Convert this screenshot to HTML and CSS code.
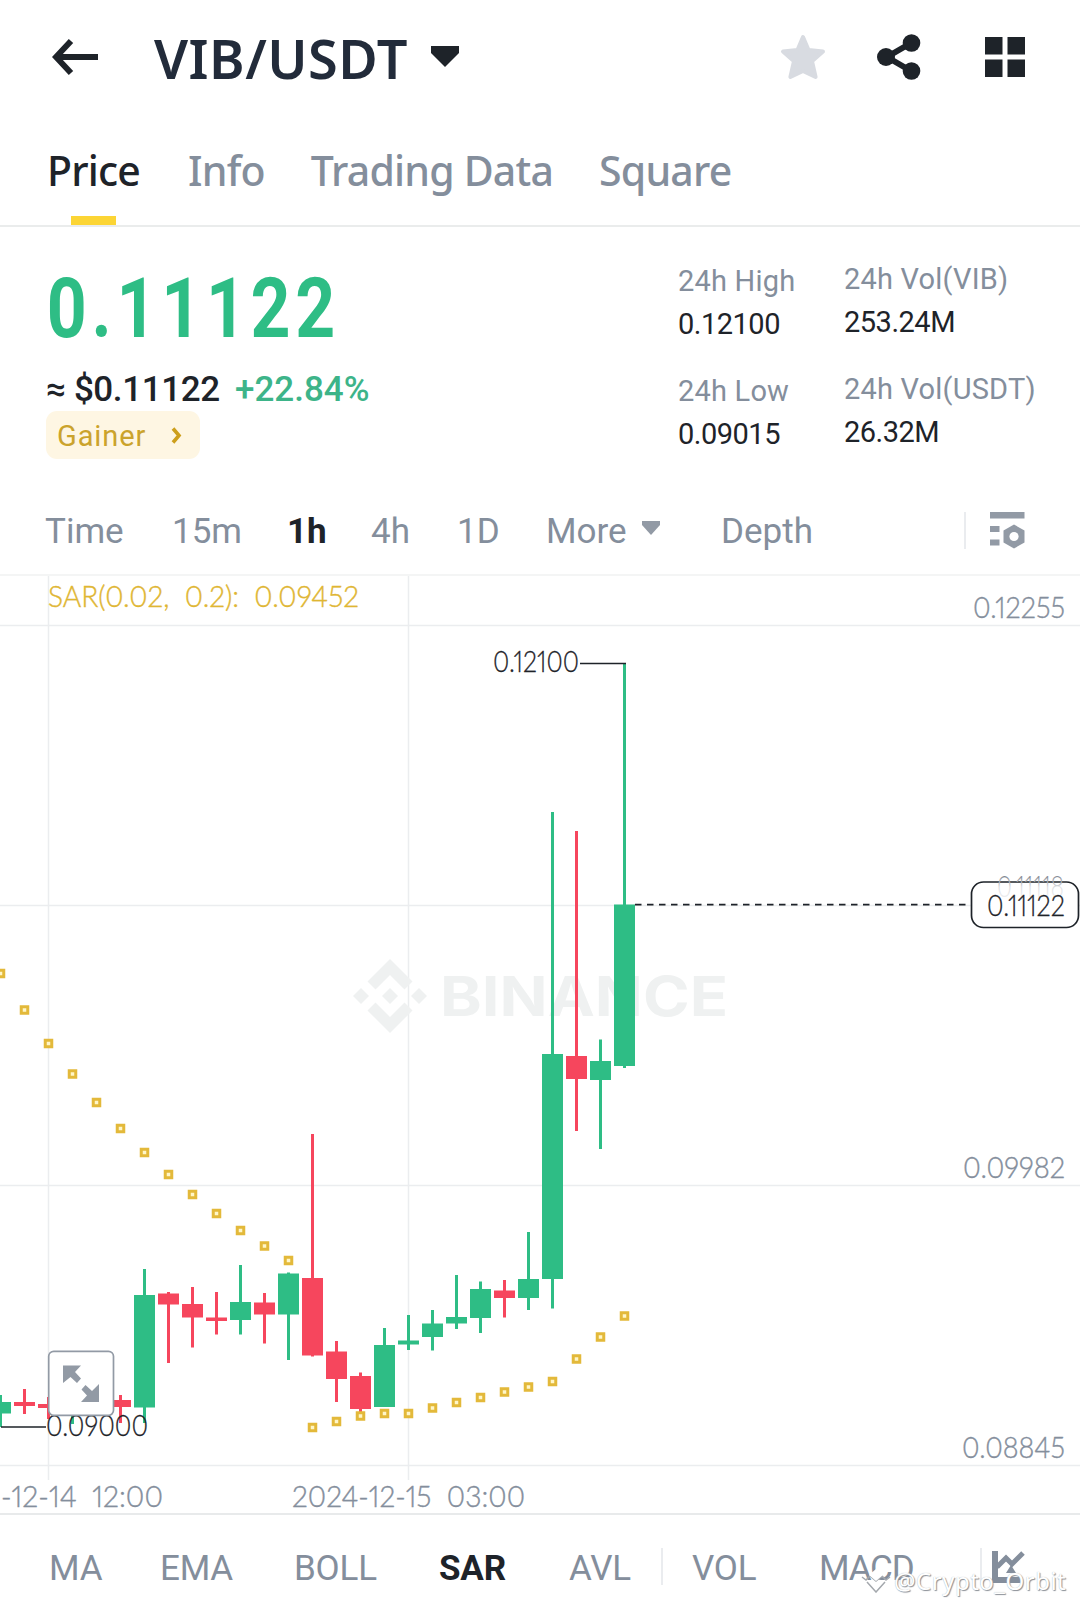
FILE: index.html
```html
<!DOCTYPE html>
<html lang="en">
<head>
    <meta charset="UTF-8">
    <meta name="viewport" content="width=device-width, initial-scale=1.0">
    <title>VIB/USDT</title>
    <link rel="stylesheet" href="styles.css">
</head>
<body>
    <div class="header">
        <svg class="back" width="46" height="38" viewBox="0 0 46 38">
            <path d="M46 19H6M19 3L4 19l15 16" fill="none" stroke="#1e2329" stroke-width="6"/>
        </svg>
        <h1>VIB/USDT</h1>
        <svg class="caret" width="28" height="22" viewBox="0 0 28 22"><path d="M0 0h28v7L14 21 0 7z" fill="#1e2329"/></svg>
        <svg class="star" width="46" height="46" viewBox="0 0 46 46">
            <path d="M23 3l5.500 13 14.500 1.600-11 9.600 3.600 15.800L23 37 10.400 43 14 27.200 3 17.600 17.500 16z" fill="#d8dbe1" stroke="#d8dbe1" stroke-width="4" stroke-linejoin="round"/>
        </svg>
        <svg class="share" width="44" height="46" viewBox="0 0 44 46">
            <path d="M34 9L10 23l24 14" fill="none" stroke="#1e2329" stroke-width="6"/>
            <circle cx="34.500" cy="9" r="8.800" fill="#1e2329"/>
            <circle cx="9" cy="23" r="9" fill="#1e2329"/>
            <circle cx="34.500" cy="37" r="8.800" fill="#1e2329"/>
        </svg>
        <svg class="menu" width="40" height="40" viewBox="0 0 40 40">
            <path d="M0 0h17.500v17.500H0zM22.500 0H40v17.500H22.500zM0 22.500h17.500V40H0zM22.500 22.500H40V40H22.500z" fill="#1e2329"/>
        </svg>
    </div>

    <div class="tabs">
        <div class="tab active"><span>Price</span></div>
        <div class="tab">Info</div>
        <div class="tab">Trading Data</div>
        <div class="tab">Square</div>
    </div>

    <div class="ticker">
        <div class="quote">
            <div class="price">0.11122</div>
            <div class="fiat"><span class="usd">≈ $0.11122</span><span class="change">+22.84%</span></div>
            <div class="badge">Gainer
                <svg width="11" height="17" viewBox="0 0 11 17"><path d="M2 1.500l6 7-6 7" fill="none" stroke="#cd9f1c" stroke-width="3.600"/></svg>
            </div>
        </div>
        <div class="stats">
            <p class="label">24h High</p>
            <p class="value">0.12100</p>
            <p class="label">24h Low</p>
            <p class="value">0.09015</p>
        </div>
        <div class="stats volume">
            <p class="label">24h Vol(VIB)</p>
            <p class="value">253.24M</p>
            <p class="label">24h Vol(USDT)</p>
            <p class="value">26.32M</p>
        </div>
    </div>

    <div class="periods">
        <span>Time</span>
        <span>15m</span>
        <span class="active">1h</span>
        <span>4h</span>
        <span>1D</span>
        <span>More<svg class="more-caret" width="18" height="14" viewBox="0 0 18 14"><path d="M0 0h18v4L9 14 0 4z" fill="#929aa5"/></svg></span>
        <span>Depth</span>
        <i class="divider"></i>
        <svg width="35" height="37" viewBox="0 0 35 37">
            <path d="M0 0h34.500v6.500H0zM0 14h9.500v6H0zM0 27.500h9.500v6H0z" fill="#929aa5"/>
            <path d="M24 12.500l10.500 6v12L24 36.500l-10.500-6v-12z" fill="#929aa5"/>
            <circle cx="24" cy="24.500" r="4.600" fill="#fff"/>
        </svg>
    </div>

    <svg class="chart" width="1080" height="937" viewBox="0 576 1080 937">
        <defs>
            <linearGradient id="fade" x1="0" y1="876" x2="0" y2="898" gradientUnits="userSpaceOnUse">
                <stop offset="0" stop-color="#808791"/>
                <stop offset="0.250" stop-color="#a9adb4"/>
                <stop offset="0.500" stop-color="#dcdee1"/>
                <stop offset="1" stop-color="#eeeff0"/>
            </linearGradient>
        </defs>
        <path class="grid" d="M0 625.500H1080M0 905.500H1080M0 1185.500H1080M0 1465.500H1080M48.500 576V1480M408.500 576V1480"/>

        <g class="watermark">
            <path d="M390 959l22.500 22.500-8 8L390 975l-14.500 14.500-8-8zM390 1033l22.500-22.500-8-8L390 1017l-14.500-14.500-8 8zM390 988l8 8-8 8-8-8zM361 988l8 8-8 8-8-8zM419 988l8 8-8 8-8-8z"/>
            <text x="440" y="1016" textLength="288" lengthAdjust="spacingAndGlyphs">BINANCE</text>
        </g>

        <g id="candles"></g>
        <g id="sar"></g>

        <path d="M580 663.500H626M1 1427H46" stroke="#1e2329" stroke-width="1.700"/>
        <path d="M635 904.700H966" stroke="#1e2329" stroke-width="1.700" stroke-dasharray="6.500 5.500"/>

        <text class="sar-label" x="48" y="607" textLength="311" lengthAdjust="spacingAndGlyphs">SAR(0.02,&#160; 0.2):&#160; 0.09452</text>
        <text class="axis" x="973" y="618" textLength="92" lengthAdjust="spacingAndGlyphs">0.12255</text>
        <text class="axis" x="963" y="1178" textLength="102" lengthAdjust="spacingAndGlyphs">0.09982</text>
        <text class="axis" x="962" y="1458" textLength="103" lengthAdjust="spacingAndGlyphs">0.08845</text>
        <text class="axis" x="1" y="1507" textLength="162" lengthAdjust="spacingAndGlyphs">-12-14&#160; 12:00</text>
        <text class="axis" x="292" y="1507" textLength="233" lengthAdjust="spacingAndGlyphs">2024-12-15&#160; 03:00</text>
        <text class="mark" x="493" y="672" textLength="86" lengthAdjust="spacingAndGlyphs">0.12100</text>
        <text class="mark" x="46" y="1436" textLength="102" lengthAdjust="spacingAndGlyphs">0.09000</text>

        <rect x="971.500" y="882" width="107" height="45.500" rx="12" fill="#fff" stroke="#1e2329" stroke-width="1.700"/>
        <text class="ghost" x="997" y="897" textLength="67" lengthAdjust="spacingAndGlyphs">0.11118</text>
        <text class="mark" x="987" y="916" textLength="78" lengthAdjust="spacingAndGlyphs">0.11122</text>

        <rect x="48.700" y="1351.300" width="64.800" height="64" rx="5" fill="#fff" stroke="#929aa5" stroke-width="1.700"/>
        <path d="M63 1365.500h18l-6 6.500 6 6.500-4 4.500-6.500-6-7.500 6zM99 1402H81l6-6.500-5.500-6 4-4.500 6.500 6 7-7z" fill="#929aa5"/>
    </svg>

    <div class="indicators">
        <span>MA</span>
        <span>EMA</span>
        <span>BOLL</span>
        <span class="active">SAR</span>
        <span>AVL</span>
        <i class="divider"></i>
        <span>VOL</span>
        <span class="macd">MACD</span>
        <i class="divider"></i>
        <svg class="settings" width="34" height="34" viewBox="0 0 34 34">
            <path d="M0 1h6v26h24v6H0z" fill="#848e9c"/>
            <path d="M5 17l9-9 6 6L31 3" fill="none" stroke="#848e9c" stroke-width="5"/>
            <path d="M19 15l5 8H14z" fill="#848e9c"/>
        </svg>
        <div class="credit">
            <svg width="30" height="24" viewBox="0 0 30 24">
                <path d="M1 8l4 3 4-4 6 5 6-5 4 4 4-3M6 13l9 10 9-10" fill="none" stroke="#a4a8ad" stroke-width="1.500"/>
                <path d="M15 0l7 6-7 6-7-6z" fill="#fff"/>
            </svg>
            <span>@Crypto_Orbit</span>
        </div>
    </div>

    <script>
        // [color, high, top of body, bottom of body, low]
        const candles = [
            ['g', 1395, 1402, 1413.5, 1427], ['r', 1389, 1402, 1406, 1414], ['r', 1397, 1404, 1408, 1419],
            ['g', 1400, 1403, 1412, 1424], ['r', 1398, 1401, 1408, 1412], ['r', 1395, 1400, 1407, 1423],
            ['g', 1269, 1295, 1407.5, 1423], ['r', 1292, 1293.5, 1304.5, 1363], ['r', 1287, 1304, 1317.5, 1347.5],
            ['r', 1292, 1317.5, 1321, 1334.5], ['g', 1265, 1302, 1320, 1334.5], ['r', 1293, 1302.5, 1314.5, 1343.5],
            ['g', 1272.5, 1273.5, 1314.5, 1360], ['r', 1134, 1278, 1355.5, 1356.5], ['r', 1341, 1351.5, 1379, 1402],
            ['r', 1372.5, 1376, 1409, 1412], ['g', 1328, 1345, 1407, 1407], ['g', 1315, 1340.5, 1344.5, 1350],
            ['g', 1310, 1323.5, 1337, 1350.5], ['g', 1275, 1317, 1323.5, 1329], ['g', 1281.5, 1289, 1318, 1333],
            ['r', 1280, 1290.5, 1298, 1317.5], ['g', 1232, 1279, 1298, 1310], ['g', 812, 1054, 1279, 1308.5],
            ['r', 831, 1056, 1079, 1131], ['g', 1039.5, 1061, 1080, 1149], ['g', 663, 904.5, 1066, 1068]
        ];
        const sar = [
            973.5, 1010, 1043.5, 1074, 1102.5, 1128.5, 1152.5, 1174.5, 1194.5, 1213.5, 1230.5, 1246, 1260.5,
            1427.5, 1421.5, 1416, 1413.5, 1413.5, 1408, 1402.5, 1397.5, 1392, 1387, 1381.5, 1359, 1337, 1316
        ];
        const STEP = 24;

        document.getElementById('candles').innerHTML = candles.map(([c, high, top, bottom, low], i) => {
            const x = 0.5 + i * STEP;
            return `<g class="${c}"><rect x="${x - 1.5}" y="${high}" width="3" height="${low - high}"/>` +
                `<rect x="${x - 10.5}" y="${top}" width="21" height="${bottom - top}"/></g>`;
        }).join('');

        document.getElementById('sar').innerHTML = sar.map((y, i) =>
            `<rect x="${i * STEP - 2.75}" y="${y - 3.25}" width="6.500" height="6.500"/>`
        ).join('');
    </script>
</body>
</html>
```
FILE: styles.css
```css
* {
    box-sizing: border-box;
}
body {
    margin: 0;
    width: 1080px;
    height: 1604px;
    overflow: hidden;
    background-color: #fff;
    color: #1e2329;
    font-family: Roboto, "Liberation Sans", sans-serif;
}
svg {
    display: block;
    flex: none;
}
.header {
    display: flex;
    align-items: center;
    height: 114px;
    padding: 0 55px 0 52px;
}
.header h1 {
    width: 277px;
    margin: 0 0 0 56px;
    padding-top: 2px;
    font-family: "Noto Sans", sans-serif;
    font-size: 54px;
    font-weight: 600;
    line-height: 60px;
    letter-spacing: 0.5px;
    color: #222b3a;
}
.star {
    margin-left: auto;
}
.share {
    margin-left: 51px;
}
.menu {
    margin-left: 64px;
}
.tabs {
    display: flex;
    gap: 46px;
    height: 113px;
    padding-left: 47px;
    border-bottom: 2px solid #eaecec;
    font-family: "Noto Sans", sans-serif;
    font-size: 41px;
    font-weight: 500;
    line-height: 113px;
    letter-spacing: -0.8px;
    color: #848e9c;
    white-space: nowrap;
}
.tab.active {
    position: relative;
    height: 111px;
    margin-right: 2px;
    color: #1e2329;
}
.tab.active::after {
    content: "";
    position: absolute;
    left: 24px;
    bottom: 0;
    width: 45px;
    height: 9px;
    background-color: #fcd535;
}
.ticker {
    display: flex;
    height: 260px;
    padding-left: 46px;
}
.quote {
    width: 632px;
    padding-top: 40px;
}
.price {
    padding-left: 1px;
    font-size: 83px;
    font-weight: 700;
    line-height: 83px;
    letter-spacing: 5.6px;
    color: #2ebd85;
    transform: scaleX(0.84);
    transform-origin: left;
}
.fiat {
    display: flex;
    margin-top: 19px;
    font-size: 35px;
    font-weight: 500;
    line-height: 42px;
}
.usd {
    width: 189px;
    letter-spacing: -0.4px;
}
.change {
    color: #3db489;
}
.badge {
    display: flex;
    align-items: center;
    justify-content: space-between;
    width: 154px;
    height: 48px;
    padding: 1px 18px 0 11px;
    border-radius: 11px;
    background-color: #fef6e3;
    font-size: 29px;
    letter-spacing: 0.9px;
    color: #cba32c;
}
.stats {
    width: 166px;
    padding-top: 38px;
    font-size: 29px;
    line-height: 32px;
    white-space: nowrap;
}
.stats.volume {
    padding-top: 36px;
}
.stats p {
    margin: 0;
}
.stats .label {
    margin-bottom: 11px;
    letter-spacing: 0.2px;
    color: #848e9c;
}
.stats .value {
    margin-bottom: 35px;
    letter-spacing: -0.5px;
}
.periods {
    display: grid;
    grid-template-columns: 127px 115px 84px 86px 89px 175px 243px 26px 35px;
    align-items: center;
    height: 89px;
    padding-left: 45px;
    border-bottom: 2px solid #f4f5f5;
    font-size: 35px;
    color: #848e9c;
}
.periods span {
    padding-top: 2px;
}
.periods .active,
.indicators .active {
    font-weight: 700;
    color: #1e2329;
}
.more-caret {
    display: inline-block;
    margin-left: 15px;
    vertical-align: 8px;
}
.divider {
    width: 2px;
    height: 37px;
    background-color: #eaecef;
}
.chart {
    font-family: Lato, sans-serif;
    font-size: 30px;
    font-weight: 300;
    font-variant-numeric: proportional-nums;
}
.grid {
    fill: none;
    stroke: #ebedef;
    stroke-width: 1.5;
}
.watermark {
    fill: #eff1f1;
    font-family: Inter, sans-serif;
    font-size: 55px;
    font-weight: 700;
}
.g {
    fill: #2ebd85;
}
.r {
    fill: #f6465d;
}
#sar {
    fill: #fff6c8;
    stroke: #e3b93a;
    stroke-width: 3;
}
.sar-label {
    fill: #dfb633;
    stroke: #dfb633;
    stroke-width: 0.4;
}
.axis {
    fill: #848e9c;
    stroke: #848e9c;
    stroke-width: 0.4;
}
.mark {
    fill: #1e2329;
    stroke: #1e2329;
    stroke-width: 0.3;
}
.ghost {
    fill: url(#fade);
}
.indicators {
    position: relative;
    display: grid;
    grid-template-columns: 111px 134px 145px 130px 92px 31px 127px 161px 12px 34px;
    align-items: center;
    height: 91px;
    padding: 18px 0 0 49px;
    border-top: 2px solid #e8eaeb;
    font-size: 35px;
    letter-spacing: -0.2px;
    color: #848e9c;
}
.indicators .macd {
    letter-spacing: -1.2px;
}
.indicators .divider,
.settings {
    margin-top: -4px;
}
.credit {
    position: absolute;
    left: 861px;
    top: 49px;
    display: flex;
    align-items: center;
    gap: 3px;
    font-family: "Noto Sans", sans-serif;
    font-size: 24px;
    letter-spacing: 0.5px;
    color: #fff;
    text-shadow: 1px 1px 1px #8a8f96, 0 0 1px #b0b4b9;
}
```
